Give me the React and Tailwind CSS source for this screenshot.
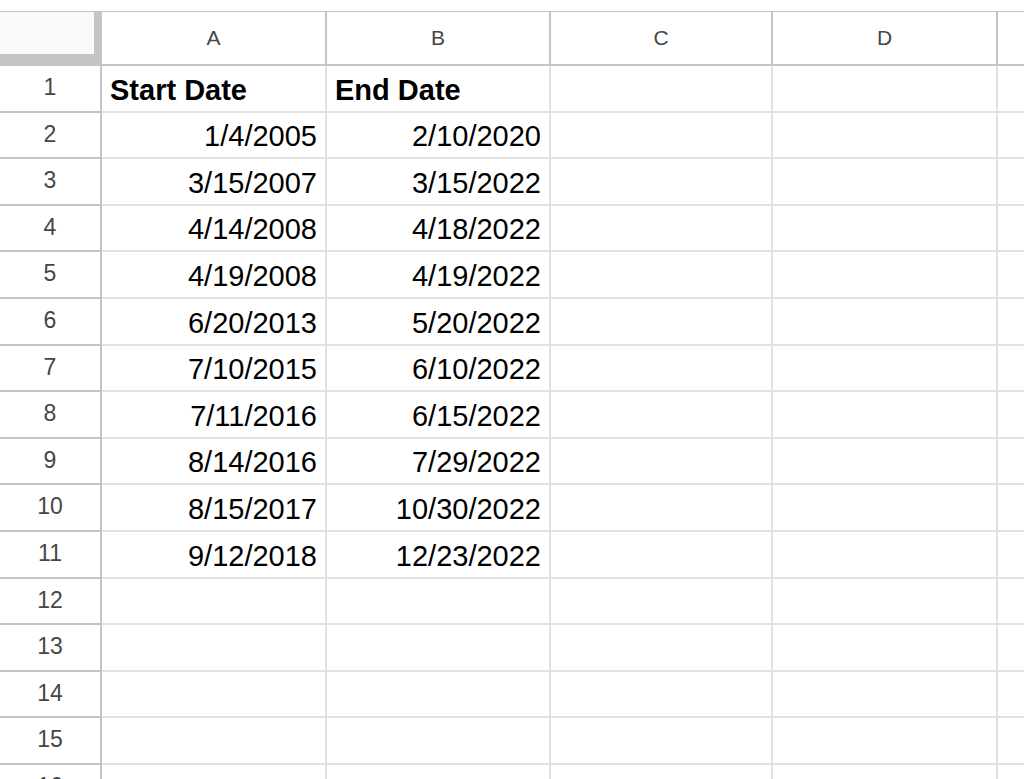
import React from "react";

const rows = [
  ["Start Date", "End Date", true],
  ["1/4/2005", "2/10/2020"],
  ["3/15/2007", "3/15/2022"],
  ["4/14/2008", "4/18/2022"],
  ["4/19/2008", "4/19/2022"],
  ["6/20/2013", "5/20/2022"],
  ["7/10/2015", "6/10/2022"],
  ["7/11/2016", "6/15/2022"],
  ["8/14/2016", "7/29/2022"],
  ["8/15/2017", "10/30/2022"],
  ["9/12/2018", "12/23/2022"],
  ["", ""],
  ["", ""],
  ["", ""],
  ["", ""],
  ["", ""],
];

const font = { fontFamily: '"Liberation Sans", Arial, sans-serif' };

const widths = ["w-[225px]", "w-[224px]", "w-[222px]", "w-[225px]", "w-[224px]"];

function DataCell({ text, bold, w }) {
  return (
    <div
      className={
        w +
        " shrink-0 h-full flex items-end pb-[6px] border-r-2 border-b-2 border-[#e2e2e2] overflow-hidden whitespace-nowrap text-[29px] leading-none text-black " +
        (bold ? "justify-start pl-[8px] font-bold" : "justify-end pr-[8px]")
      }
    >
      {text}
    </div>
  );
}

export default function App() {
  return (
    <div className="w-[1024px] h-[779px] overflow-hidden bg-white" style={font}>
      <div className="h-[11px]" />
      <div className="border-t border-[#c7c7c7]">
        {/* header row */}
        <div className="flex h-[54px]">
          <div className="w-[102px] shrink-0 h-full bg-[#f8f9fa] border-r-[8px] border-b-[12px] border-[#c4c4c4]" />
          {["A", "B", "C", "D", ""].map((l, i) => (
            <div
              key={i}
              className={
                widths[i] +
                " shrink-0 h-full flex items-center justify-center border-r-2 border-b-2 border-[#c4c4c4] text-[21px] text-[#444746]"
              }
            >
              {l}
            </div>
          ))}
        </div>
        {rows.map((r, i) => (
          <div key={i} className="flex h-[46.6px]">
            <div className="w-[102px] shrink-0 h-full flex items-center justify-center pb-[2px] border-r-2 border-b-2 border-[#c4c4c4] text-[23px] text-[#444746]">
              {i + 1}
            </div>
            <DataCell w={widths[0]} text={r[0]} bold={r[2]} />
            <DataCell w={widths[1]} text={r[1]} bold={r[2]} />
            <DataCell w={widths[2]} text="" />
            <DataCell w={widths[3]} text="" />
            <DataCell w={widths[4]} text="" />
          </div>
        ))}
      </div>
    </div>
  );
}
